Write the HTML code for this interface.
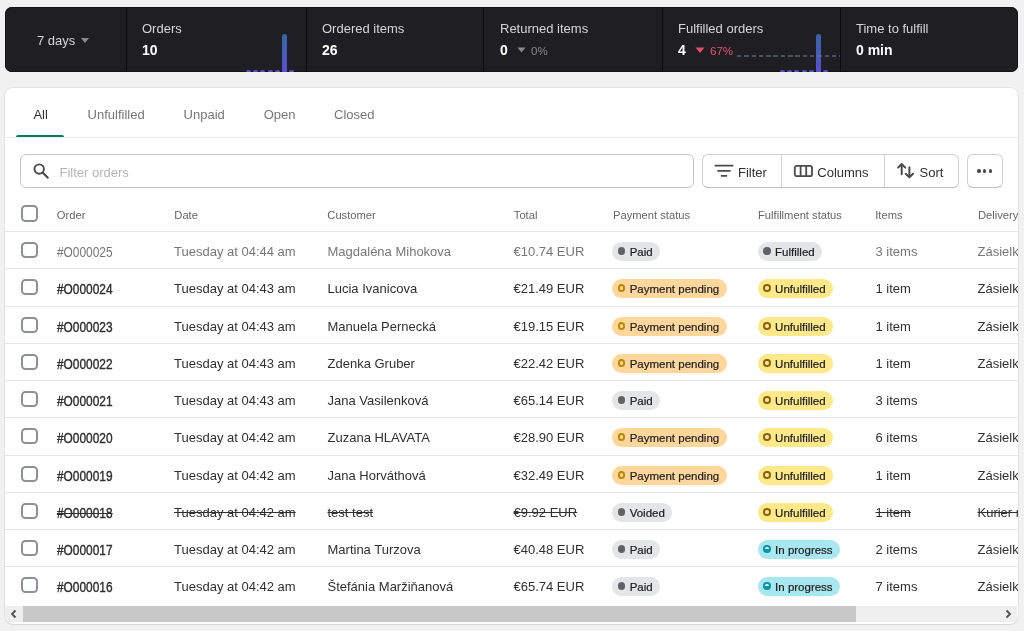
<!DOCTYPE html>
<html><head><meta charset="utf-8"><style>
*{box-sizing:border-box;margin:0;padding:0}
html,body{width:1024px;height:631px;overflow:hidden;background:#f1f1f1;font-family:"Liberation Sans",sans-serif;color:#303030}
.t{position:absolute;white-space:nowrap}
.a{position:absolute}
#bar{position:absolute;left:5px;top:7px;width:1013px;height:65px;background:#1f1f23;border-radius:7px;box-shadow:inset 0 0 0 1px #121215;overflow:hidden}
#bar .in{will-change:transform;position:absolute;left:-5px;top:-7px;width:1024px;height:80px}
.sep{position:absolute;top:7px;width:1px;height:65px;background:#0b0b0d}
#card{position:absolute;left:5px;top:88px;width:1013px;height:536px;background:#fff;border-radius:8px;box-shadow:0 0 0 1px rgba(0,0,0,.025),0 0 2px rgba(0,0,0,.10),0 1px 1px rgba(0,0,0,.05);overflow:hidden}
#card .in{will-change:transform;position:absolute;left:-5px;top:-88px;width:1024px;height:631px}
.cb{position:absolute;left:21.2px;width:16.6px;height:16.6px;border:2px solid #8b9196;border-radius:4.5px;background:#fff}
.hl{position:absolute;left:5px;width:1013px;height:1px;background:#e6e6e6}
.bd{position:absolute;height:19px;border-radius:10px;font-size:11.5px;line-height:20.6px;white-space:nowrap;padding-left:17.5px;color:#202020;-webkit-text-stroke:0.2px #202020}
.bd i{position:absolute;left:5.8px;top:5.8px;width:7.4px;height:7.4px;border-radius:50%}
.st{text-decoration:line-through}
</style></head><body>
<div id="bar"><div class="in">
<div class="t " style="left:37px;top:32.00px;font-size:13px;line-height:17px;color:#d6d6d6">7 days</div>
<svg class="a" style="left:80px;top:37px" width="10" height="6"><path d="M1 1h8l-4 5z" fill="#8a8a8a"/></svg>
<div class="sep" style="left:126px"></div>
<div class="sep" style="left:306px"></div>
<div class="sep" style="left:483px"></div>
<div class="sep" style="left:662px"></div>
<div class="sep" style="left:840px"></div>
<div class="t " style="left:142px;top:20.20px;font-size:13px;line-height:17px;color:#d6d6d6">Orders</div>
<div class="t " style="left:142px;top:41.15px;font-size:14px;line-height:18px;color:#fff;font-weight:bold">10</div>
<div class="t " style="left:322px;top:20.20px;font-size:13px;line-height:17px;color:#d6d6d6">Ordered items</div>
<div class="t " style="left:322px;top:41.15px;font-size:14px;line-height:18px;color:#fff;font-weight:bold">26</div>
<div class="t " style="left:500px;top:20.20px;font-size:13px;line-height:17px;color:#d6d6d6">Returned items</div>
<div class="t " style="left:500px;top:41.15px;font-size:14px;line-height:18px;color:#fff;font-weight:bold">0</div>
<div class="t " style="left:678px;top:20.20px;font-size:13px;line-height:17px;color:#d6d6d6">Fulfilled orders</div>
<div class="t " style="left:678px;top:41.15px;font-size:14px;line-height:18px;color:#fff;font-weight:bold">4</div>
<div class="t " style="left:856px;top:20.20px;font-size:13px;line-height:17px;color:#d6d6d6">Time to fulfill</div>
<div class="t " style="left:856px;top:41.15px;font-size:14px;line-height:18px;color:#fff;font-weight:bold">0 min</div>
<svg class="a" style="left:517px;top:47px" width="9" height="6"><path d="M0.5 0.5h8l-4 5z" fill="#8a8a8a"/></svg>
<div class="t " style="left:531px;top:43.52px;font-size:11.5px;line-height:15px;color:#8a8a8a">0%</div>
<svg class="a" style="left:695px;top:47px" width="10" height="6"><path d="M0.5 0.5h9l-4.5 5.5z" fill="#e5506a"/></svg>
<div class="t " style="left:710px;top:43.52px;font-size:11.5px;line-height:15px;color:#e8506a">67%</div>
<div class="a" style="left:245.6px;top:69.6px;width:5px;height:3.4px;border-radius:2px 2px 0 0;background:#5753c9"></div>
<div class="a" style="left:252.9px;top:69.6px;width:5px;height:3.4px;border-radius:2px 2px 0 0;background:#5753c9"></div>
<div class="a" style="left:260.2px;top:69.6px;width:5px;height:3.4px;border-radius:2px 2px 0 0;background:#5753c9"></div>
<div class="a" style="left:267.5px;top:69.6px;width:5px;height:3.4px;border-radius:2px 2px 0 0;background:#5753c9"></div>
<div class="a" style="left:274.9px;top:69.6px;width:5px;height:3.4px;border-radius:2px 2px 0 0;background:#5753c9"></div>
<div class="a" style="left:282.0px;top:34px;width:5px;height:40px;border-radius:2.5px 2.5px 0 0;background:linear-gradient(#3567a8,#5b4fd0)"></div>
<div class="a" style="left:289.2px;top:69.6px;width:5px;height:3.4px;border-radius:2px 2px 0 0;background:#5753c9"></div>
<div class="a" style="left:779.6px;top:69.6px;width:5px;height:3.4px;border-radius:2px 2px 0 0;background:#5753c9"></div>
<div class="a" style="left:786.9px;top:69.6px;width:5px;height:3.4px;border-radius:2px 2px 0 0;background:#5753c9"></div>
<div class="a" style="left:794.2px;top:69.6px;width:5px;height:3.4px;border-radius:2px 2px 0 0;background:#5753c9"></div>
<div class="a" style="left:801.5px;top:69.6px;width:5px;height:3.4px;border-radius:2px 2px 0 0;background:#5753c9"></div>
<div class="a" style="left:808.9px;top:69.6px;width:5px;height:3.4px;border-radius:2px 2px 0 0;background:#5753c9"></div>
<div class="a" style="left:816.0px;top:34px;width:5px;height:40px;border-radius:2.5px 2.5px 0 0;background:linear-gradient(#3567a8,#5b4fd0)"></div>
<div class="a" style="left:823.2px;top:69.6px;width:5px;height:3.4px;border-radius:2px 2px 0 0;background:#5753c9"></div>
<div class="a" style="left:737px;top:55px;width:103px;height:2px;background:repeating-linear-gradient(90deg,rgba(110,122,145,.55) 0 4.5px,transparent 4.5px 7.3px)"></div>
</div></div>
<div id="card"><div class="in">
<div class="t " style="left:33.4px;top:106.00px;font-size:13px;line-height:17px;color:#303030">All</div>
<div class="t " style="left:87.6px;top:106.00px;font-size:13px;line-height:17px;color:#777777">Unfulfilled</div>
<div class="t " style="left:183.6px;top:106.00px;font-size:13px;line-height:17px;color:#777777">Unpaid</div>
<div class="t " style="left:263.7px;top:106.00px;font-size:13px;line-height:17px;color:#777777">Open</div>
<div class="t " style="left:334px;top:106.00px;font-size:13px;line-height:17px;color:#777777">Closed</div>
<div class="a" style="left:16px;top:135px;width:48px;height:3px;background:#047b5d;border-radius:2px 2px 0 0"></div>
<div class="hl" style="top:137px;background:#ebebeb"></div>
<div class="a" style="left:20px;top:154px;width:674px;height:34px;border:1px solid #c4c4c4;border-radius:6px"></div>
<svg class="a" style="left:32px;top:162px" width="18" height="18" viewBox="0 0 18 18"><circle cx="7.2" cy="7.1" r="4.7" fill="none" stroke="#4a4a4a" stroke-width="1.9"/><path d="M10.8 10.8l5 5" stroke="#4a4a4a" stroke-width="2" stroke-linecap="round"/></svg>
<div class="t " style="left:59.5px;top:163.50px;font-size:13px;line-height:17px;color:#b5b5b5">Filter orders</div>
<div class="a" style="left:702px;top:154px;width:257px;height:34px;border:1px solid #d0d0d0;border-bottom-color:#bdbdbd;border-radius:6px"></div>
<div class="a" style="left:781px;top:155px;width:1px;height:32px;background:#d4d4d4"></div>
<div class="a" style="left:884px;top:155px;width:1px;height:32px;background:#d4d4d4"></div>
<svg class="a" style="left:713px;top:163px" width="22" height="15" viewBox="0 0 22 15"><path d="M2.3 2.7h17.4M5 7.8h12M8.5 12.8h5" stroke="#4a4a4a" stroke-width="1.7" stroke-linecap="round"/></svg>
<div class="t " style="left:738px;top:163.50px;font-size:13px;line-height:17px;">Filter</div>
<svg class="a" style="left:793px;top:164px" width="21" height="14" viewBox="0 0 21 14"><rect x="1.8" y="1.8" width="17.2" height="10.4" rx="2" fill="none" stroke="#4a4a4a" stroke-width="1.8"/><path d="M7.6 2v10M13.2 2v10" stroke="#4a4a4a" stroke-width="1.8"/></svg>
<div class="t " style="left:817.3px;top:163.50px;font-size:13px;line-height:17px;">Columns</div>
<svg class="a" style="left:892px;top:158px" width="24" height="24" viewBox="0 0 24 24"><path d="M9.7 16.2V6.2M6.1 9.6L9.7 6l3.6 3.6M17.4 9.2V19.2M13.8 15.8l3.6 3.6 3.6-3.6" fill="none" stroke="#4a4a4a" stroke-width="2" stroke-linecap="round" stroke-linejoin="round"/></svg>
<div class="t " style="left:919.6px;top:163.50px;font-size:13px;line-height:17px;">Sort</div>
<div class="a" style="left:967px;top:154px;width:36px;height:34px;border:1px solid #d0d0d0;border-bottom-color:#bdbdbd;border-radius:6px"></div>
<div class="a" style="left:977.0px;top:169.1px;width:3.6px;height:3.6px;border-radius:50%;background:#4a4a4a"></div>
<div class="a" style="left:982.9px;top:169.1px;width:3.6px;height:3.6px;border-radius:50%;background:#4a4a4a"></div>
<div class="a" style="left:988.9px;top:169.1px;width:3.6px;height:3.6px;border-radius:50%;background:#4a4a4a"></div>
<div class="cb" style="top:205.2px"></div>
<div class="t " style="left:56.8px;top:207.62px;font-size:11.2px;line-height:15px;color:#666666">Order</div>
<div class="t " style="left:174.3px;top:207.62px;font-size:11.2px;line-height:15px;color:#666666">Date</div>
<div class="t " style="left:327.3px;top:207.62px;font-size:11.2px;line-height:15px;color:#666666">Customer</div>
<div class="t " style="left:513.8px;top:207.62px;font-size:11.2px;line-height:15px;color:#666666">Total</div>
<div class="t " style="left:613px;top:207.62px;font-size:11.2px;line-height:15px;color:#666666">Payment status</div>
<div class="t " style="left:758px;top:207.62px;font-size:11.2px;line-height:15px;color:#666666">Fulfillment status</div>
<div class="t " style="left:875.2px;top:207.62px;font-size:11.2px;line-height:15px;color:#666666">Items</div>
<div class="t " style="left:978px;top:207.62px;font-size:11.2px;line-height:15px;color:#666666">Delivery</div>
<div class="hl" style="top:231px"></div>
<div class="cb" style="top:241.7px"></div>
<div class="t " style="left:57.2px;top:242.65px;font-size:14px;line-height:18px;color:#777777;transform:scaleX(0.85);transform-origin:0 0;">#O000025</div>
<div class="t " style="left:174px;top:243.00px;font-size:13px;line-height:17px;color:#777777">Tuesday at 04:44 am</div>
<div class="t " style="left:327.5px;top:243.00px;font-size:13px;line-height:17px;color:#777777">Magdaléna Mihokova</div>
<div class="t " style="left:513.5px;top:243.00px;font-size:13px;line-height:17px;color:#777777">€10.74 EUR</div>
<div class="bd" style="left:612.2px;top:241.6px;background:#e4e5e7;padding-right:7.5px"><i style="background:#5f6368"></i>Paid</div>
<div class="bd" style="left:757.6px;top:241.6px;background:#e4e5e7;padding-right:7.5px"><i style="background:#5f6368"></i>Fulfilled</div>
<div class="t " style="left:875.5px;top:243.00px;font-size:13px;line-height:17px;color:#777777">3 items</div>
<div class="t " style="left:977.5px;top:243.00px;font-size:13px;line-height:17px;color:#777777">Zásielkovňa</div>
<div class="hl" style="top:268px"></div>
<div class="cb" style="top:278.7px"></div>
<div class="t " style="left:57.2px;top:279.65px;font-size:14px;line-height:18px;color:#303030;transform:scaleX(0.85);transform-origin:0 0;-webkit-text-stroke:0.4px #303030;">#O000024</div>
<div class="t " style="left:174px;top:280.00px;font-size:13px;line-height:17px;color:#303030">Tuesday at 04:43 am</div>
<div class="t " style="left:327.5px;top:280.00px;font-size:13px;line-height:17px;color:#303030">Lucia Ivanicova</div>
<div class="t " style="left:513.5px;top:280.00px;font-size:13px;line-height:17px;color:#303030">€21.49 EUR</div>
<div class="bd" style="left:612.2px;top:278.6px;background:#ffd79d;padding-right:7.5px"><i style="border:2px solid #b98900"></i>Payment pending</div>
<div class="bd" style="left:757.6px;top:278.6px;background:#fde88a;padding-right:7.5px"><i style="border:2px solid #8a6116"></i>Unfulfilled</div>
<div class="t " style="left:875.5px;top:280.00px;font-size:13px;line-height:17px;color:#303030">1 item</div>
<div class="t " style="left:977.5px;top:280.00px;font-size:13px;line-height:17px;color:#303030">Zásielkovňa</div>
<div class="hl" style="top:306px"></div>
<div class="cb" style="top:316.7px"></div>
<div class="t " style="left:57.2px;top:317.65px;font-size:14px;line-height:18px;color:#303030;transform:scaleX(0.85);transform-origin:0 0;-webkit-text-stroke:0.4px #303030;">#O000023</div>
<div class="t " style="left:174px;top:318.00px;font-size:13px;line-height:17px;color:#303030">Tuesday at 04:43 am</div>
<div class="t " style="left:327.5px;top:318.00px;font-size:13px;line-height:17px;color:#303030">Manuela Pernecká</div>
<div class="t " style="left:513.5px;top:318.00px;font-size:13px;line-height:17px;color:#303030">€19.15 EUR</div>
<div class="bd" style="left:612.2px;top:316.6px;background:#ffd79d;padding-right:7.5px"><i style="border:2px solid #b98900"></i>Payment pending</div>
<div class="bd" style="left:757.6px;top:316.6px;background:#fde88a;padding-right:7.5px"><i style="border:2px solid #8a6116"></i>Unfulfilled</div>
<div class="t " style="left:875.5px;top:318.00px;font-size:13px;line-height:17px;color:#303030">1 item</div>
<div class="t " style="left:977.5px;top:318.00px;font-size:13px;line-height:17px;color:#303030">Zásielkovňa</div>
<div class="hl" style="top:343px"></div>
<div class="cb" style="top:353.7px"></div>
<div class="t " style="left:57.2px;top:354.65px;font-size:14px;line-height:18px;color:#303030;transform:scaleX(0.85);transform-origin:0 0;-webkit-text-stroke:0.4px #303030;">#O000022</div>
<div class="t " style="left:174px;top:355.00px;font-size:13px;line-height:17px;color:#303030">Tuesday at 04:43 am</div>
<div class="t " style="left:327.5px;top:355.00px;font-size:13px;line-height:17px;color:#303030">Zdenka Gruber</div>
<div class="t " style="left:513.5px;top:355.00px;font-size:13px;line-height:17px;color:#303030">€22.42 EUR</div>
<div class="bd" style="left:612.2px;top:353.6px;background:#ffd79d;padding-right:7.5px"><i style="border:2px solid #b98900"></i>Payment pending</div>
<div class="bd" style="left:757.6px;top:353.6px;background:#fde88a;padding-right:7.5px"><i style="border:2px solid #8a6116"></i>Unfulfilled</div>
<div class="t " style="left:875.5px;top:355.00px;font-size:13px;line-height:17px;color:#303030">1 item</div>
<div class="t " style="left:977.5px;top:355.00px;font-size:13px;line-height:17px;color:#303030">Zásielkovňa</div>
<div class="hl" style="top:380px"></div>
<div class="cb" style="top:390.7px"></div>
<div class="t " style="left:57.2px;top:391.65px;font-size:14px;line-height:18px;color:#303030;transform:scaleX(0.85);transform-origin:0 0;-webkit-text-stroke:0.4px #303030;">#O000021</div>
<div class="t " style="left:174px;top:392.00px;font-size:13px;line-height:17px;color:#303030">Tuesday at 04:43 am</div>
<div class="t " style="left:327.5px;top:392.00px;font-size:13px;line-height:17px;color:#303030">Jana Vasilenková</div>
<div class="t " style="left:513.5px;top:392.00px;font-size:13px;line-height:17px;color:#303030">€65.14 EUR</div>
<div class="bd" style="left:612.2px;top:390.6px;background:#e4e5e7;padding-right:7.5px"><i style="background:#5f6368"></i>Paid</div>
<div class="bd" style="left:757.6px;top:390.6px;background:#fde88a;padding-right:7.5px"><i style="border:2px solid #8a6116"></i>Unfulfilled</div>
<div class="t " style="left:875.5px;top:392.00px;font-size:13px;line-height:17px;color:#303030">3 items</div>
<div class="hl" style="top:417px"></div>
<div class="cb" style="top:427.7px"></div>
<div class="t " style="left:57.2px;top:428.65px;font-size:14px;line-height:18px;color:#303030;transform:scaleX(0.85);transform-origin:0 0;-webkit-text-stroke:0.4px #303030;">#O000020</div>
<div class="t " style="left:174px;top:429.00px;font-size:13px;line-height:17px;color:#303030">Tuesday at 04:42 am</div>
<div class="t " style="left:327.5px;top:429.00px;font-size:13px;line-height:17px;color:#303030">Zuzana HLAVATA</div>
<div class="t " style="left:513.5px;top:429.00px;font-size:13px;line-height:17px;color:#303030">€28.90 EUR</div>
<div class="bd" style="left:612.2px;top:427.6px;background:#ffd79d;padding-right:7.5px"><i style="border:2px solid #b98900"></i>Payment pending</div>
<div class="bd" style="left:757.6px;top:427.6px;background:#fde88a;padding-right:7.5px"><i style="border:2px solid #8a6116"></i>Unfulfilled</div>
<div class="t " style="left:875.5px;top:429.00px;font-size:13px;line-height:17px;color:#303030">6 items</div>
<div class="t " style="left:977.5px;top:429.00px;font-size:13px;line-height:17px;color:#303030">Zásielkovňa</div>
<div class="hl" style="top:455px"></div>
<div class="cb" style="top:465.7px"></div>
<div class="t " style="left:57.2px;top:466.65px;font-size:14px;line-height:18px;color:#303030;transform:scaleX(0.85);transform-origin:0 0;-webkit-text-stroke:0.4px #303030;">#O000019</div>
<div class="t " style="left:174px;top:467.00px;font-size:13px;line-height:17px;color:#303030">Tuesday at 04:42 am</div>
<div class="t " style="left:327.5px;top:467.00px;font-size:13px;line-height:17px;color:#303030">Jana Horváthová</div>
<div class="t " style="left:513.5px;top:467.00px;font-size:13px;line-height:17px;color:#303030">€32.49 EUR</div>
<div class="bd" style="left:612.2px;top:465.6px;background:#ffd79d;padding-right:7.5px"><i style="border:2px solid #b98900"></i>Payment pending</div>
<div class="bd" style="left:757.6px;top:465.6px;background:#fde88a;padding-right:7.5px"><i style="border:2px solid #8a6116"></i>Unfulfilled</div>
<div class="t " style="left:875.5px;top:467.00px;font-size:13px;line-height:17px;color:#303030">1 item</div>
<div class="t " style="left:977.5px;top:467.00px;font-size:13px;line-height:17px;color:#303030">Zásielkovňa</div>
<div class="hl" style="top:492px"></div>
<div class="cb" style="top:502.7px"></div>
<div class="t  st" style="left:57.2px;top:503.65px;font-size:14px;line-height:18px;color:#303030;transform:scaleX(0.85);transform-origin:0 0;-webkit-text-stroke:0.4px #303030;">#O000018</div>
<div class="t  st" style="left:174px;top:504.00px;font-size:13px;line-height:17px;color:#303030">Tuesday at 04:42 am</div>
<div class="t  st" style="left:327.5px;top:504.00px;font-size:13px;line-height:17px;color:#303030">test test</div>
<div class="t  st" style="left:513.5px;top:504.00px;font-size:13px;line-height:17px;color:#303030">€9.92 EUR</div>
<div class="bd" style="left:612.2px;top:502.6px;background:#e4e5e7;padding-right:7.5px"><i style="background:#5f6368"></i>Voided</div>
<div class="bd" style="left:757.6px;top:502.6px;background:#fde88a;padding-right:7.5px"><i style="border:2px solid #8a6116"></i>Unfulfilled</div>
<div class="t  st" style="left:875.5px;top:504.00px;font-size:13px;line-height:17px;color:#303030">1 item</div>
<div class="t  st" style="left:977.5px;top:504.00px;font-size:13px;line-height:17px;color:#303030">Kurier na adresu</div>
<div class="hl" style="top:529px"></div>
<div class="cb" style="top:539.7px"></div>
<div class="t " style="left:57.2px;top:540.65px;font-size:14px;line-height:18px;color:#303030;transform:scaleX(0.85);transform-origin:0 0;-webkit-text-stroke:0.4px #303030;">#O000017</div>
<div class="t " style="left:174px;top:541.00px;font-size:13px;line-height:17px;color:#303030">Tuesday at 04:42 am</div>
<div class="t " style="left:327.5px;top:541.00px;font-size:13px;line-height:17px;color:#303030">Martina Turzova</div>
<div class="t " style="left:513.5px;top:541.00px;font-size:13px;line-height:17px;color:#303030">€40.48 EUR</div>
<div class="bd" style="left:612.2px;top:539.6px;background:#e4e5e7;padding-right:7.5px"><i style="background:#5f6368"></i>Paid</div>
<div class="bd" style="left:757.6px;top:539.6px;background:#a8e6f0;padding-right:7.5px"><i style="border:2px solid #0a95a5;background:linear-gradient(#d8f6fa 0 50%,#0a95a5 50%)"></i>In progress</div>
<div class="t " style="left:875.5px;top:541.00px;font-size:13px;line-height:17px;color:#303030">2 items</div>
<div class="t " style="left:977.5px;top:541.00px;font-size:13px;line-height:17px;color:#303030">Zásielkovňa</div>
<div class="hl" style="top:566px"></div>
<div class="cb" style="top:576.7px"></div>
<div class="t " style="left:57.2px;top:577.65px;font-size:14px;line-height:18px;color:#303030;transform:scaleX(0.85);transform-origin:0 0;-webkit-text-stroke:0.4px #303030;">#O000016</div>
<div class="t " style="left:174px;top:578.00px;font-size:13px;line-height:17px;color:#303030">Tuesday at 04:42 am</div>
<div class="t " style="left:327.5px;top:578.00px;font-size:13px;line-height:17px;color:#303030">Štefánia Maržiňanová</div>
<div class="t " style="left:513.5px;top:578.00px;font-size:13px;line-height:17px;color:#303030">€65.74 EUR</div>
<div class="bd" style="left:612.2px;top:576.6px;background:#e4e5e7;padding-right:7.5px"><i style="background:#5f6368"></i>Paid</div>
<div class="bd" style="left:757.6px;top:576.6px;background:#a8e6f0;padding-right:7.5px"><i style="border:2px solid #0a95a5;background:linear-gradient(#d8f6fa 0 50%,#0a95a5 50%)"></i>In progress</div>
<div class="t " style="left:875.5px;top:578.00px;font-size:13px;line-height:17px;color:#303030">7 items</div>
<div class="t " style="left:977.5px;top:578.00px;font-size:13px;line-height:17px;color:#303030">Zásielkovňa</div>
<div class="a" style="left:5px;top:605.5px;width:1012px;height:16.5px;background:#efefef"></div>
<div class="a" style="left:23.4px;top:605.5px;width:832.6px;height:16.5px;background:#c8c8c8"></div>
<svg class="a" style="left:9px;top:609px" width="10" height="10" viewBox="0 0 10 10"><path d="M6.5 1.5L3 5l3.5 3.5" fill="none" stroke="#505050" stroke-width="1.8"/></svg>
<svg class="a" style="left:1003px;top:609px" width="10" height="10" viewBox="0 0 10 10"><path d="M3.5 1.5L7 5 3.5 8.5" fill="none" stroke="#505050" stroke-width="1.8"/></svg>
</div></div>
</body></html>
